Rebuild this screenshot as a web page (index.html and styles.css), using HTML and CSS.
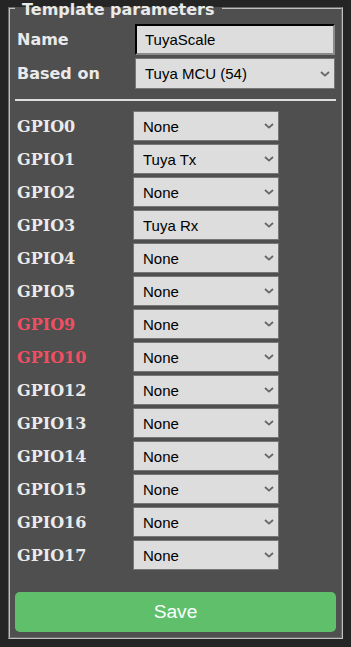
FILE: index.html
```html
<!DOCTYPE html>
<html lang="en">

<head>
    <meta charset="UTF-8">
    <meta name="viewport" content="width=device-width, initial-scale=1.0">
    <title>Template</title>
    <link rel="stylesheet" href="styles.css">
</head>

<body>
    <fieldset class="panel">
        <legend class="panel_title">Template parameters</legend>
        <div class="meta">
            <label class="meta_label" for="tpl_name">Name</label>
            <input type="text" id="tpl_name" class="meta_input" value="TuyaScale">
            <label class="meta_label" for="tpl_base">Based on</label>
            <select id="tpl_base" class="meta_select">
                <option>Tuya MCU (54)</option>
            </select>
        </div>
        <hr class="divider">
        <div class="gpio_list">
            <span class="gpio_label">GPIO0</span>
            <select class="gpio_select"><option>None</option></select>
            <span class="gpio_label">GPIO1</span>
            <select class="gpio_select"><option>Tuya Tx</option></select>
            <span class="gpio_label">GPIO2</span>
            <select class="gpio_select"><option>None</option></select>
            <span class="gpio_label">GPIO3</span>
            <select class="gpio_select"><option>Tuya Rx</option></select>
            <span class="gpio_label">GPIO4</span>
            <select class="gpio_select"><option>None</option></select>
            <span class="gpio_label">GPIO5</span>
            <select class="gpio_select"><option>None</option></select>
            <span class="gpio_label warn">GPIO9</span>
            <select class="gpio_select"><option>None</option></select>
            <span class="gpio_label warn">GPIO10</span>
            <select class="gpio_select"><option>None</option></select>
            <span class="gpio_label">GPIO12</span>
            <select class="gpio_select"><option>None</option></select>
            <span class="gpio_label">GPIO13</span>
            <select class="gpio_select"><option>None</option></select>
            <span class="gpio_label">GPIO14</span>
            <select class="gpio_select"><option>None</option></select>
            <span class="gpio_label">GPIO15</span>
            <select class="gpio_select"><option>None</option></select>
            <span class="gpio_label">GPIO16</span>
            <select class="gpio_select"><option>None</option></select>
            <span class="gpio_label">GPIO17</span>
            <select class="gpio_select"><option>None</option></select>
        </div>
        <button type="button" class="save_btn">Save</button>
    </fieldset>
</body>

</html>
```

FILE: styles.css
```css
body {
    margin: 0 8px 7px 8px;
    background-color: #252525;
    color: #eaeaea;
    font-family: "DejaVu Sans", Verdana, sans-serif;
}

.panel {
    margin: 0;
    padding: 0 5px 5px 5px;
    background-color: #4f4f4f;
    border: 2px groove #c0c0c0;
    min-width: 0;
}

.panel_title {
    padding: 4px 7px 0 7px;
    font-weight: bold;
    font-size: 16px;
    line-height: 12px;
}

.meta {
    display: grid;
    grid-template-columns: 116px 200px;
    column-gap: 2px;
    row-gap: 3px;
    align-items: center;
    padding: 8px 2px 0 2px;
}

.meta_label {
    font-weight: bold;
    font-size: 16px;
}

.meta_input,
.meta_select,
.gpio_select {
    box-sizing: border-box;
    margin: 0;
    background-color: #dddddd;
    color: #000000;
    font-family: "Liberation Sans", Arial, sans-serif;
    font-size: 15px;
}

.meta_input {
    width: 100%;
    height: 31px;
    padding: 0 8px;
    border: 2px inset #767676;
    border-color: #2a2a2a #8a8a8a #8a8a8a #2a2a2a;
}

.meta_select,
.gpio_select {
    -webkit-appearance: none;
    appearance: none;
    border: 1px solid #767676;
    border-radius: 0;
    background-image: url("data:image/svg+xml,%3Csvg xmlns='http://www.w3.org/2000/svg' width='10' height='6' viewBox='0 0 10 6'%3E%3Cpath d='M1 1l4 3.6L9 1' fill='none' stroke='%23666666' stroke-width='1.8'/%3E%3C/svg%3E");
    background-repeat: no-repeat;
    background-position: right 4px center;
}

.meta_select {
    width: 100%;
    height: 31px;
    padding: 0 9px;
}

.divider {
    margin: 10px 0 10px 0;
    border: 0;
    border-top: 2px solid #dddddd;
}

.gpio_list {
    display: grid;
    grid-template-columns: 116px 146px;
    row-gap: 3px;
    align-items: center;
    padding-left: 2px;
}

.gpio_label {
    font-family: "DejaVu Serif", Georgia, serif;
    font-weight: bold;
    font-size: 16px;
    color: #eaeaea;
}

.gpio_label.warn {
    color: #f04f62;
}

.gpio_select {
    width: 146px;
    height: 30px;
    padding: 0 9px;
}

.save_btn {
    display: block;
    width: 100%;
    margin-top: 22px;
    border: 0;
    border-radius: 0.3rem;
    background-color: #5fbf6b;
    color: #faffff;
    font-family: "Liberation Sans", Arial, sans-serif;
    font-size: 1.2rem;
    line-height: 40px;
    padding: 0;
}
```
